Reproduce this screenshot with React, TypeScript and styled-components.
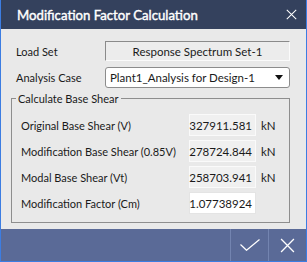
import styled, { createGlobalStyle } from 'styled-components';

const GlobalStyle = createGlobalStyle`
  html, body {
    margin: 0;
    padding: 0;
    background: #e9e9e9;
  }
  * {
    box-sizing: border-box;
  }
`

const Window = styled.div`
  width: 307px;
  height: 262px;
  display: flex;
  flex-direction: column;
  background: #e9e9e9;
  border: 1px solid #3c7de2;
  border-top: none;
  font-family: Lato, "Liberation Sans", sans-serif;
  font-size: 11.5px;
  color: #1a1a1a;
`

const TitleBar = styled.div`
  height: 29px;
  flex: none;
  display: flex;
  align-items: center;
  justify-content: space-between;
  padding: 0 9px 0 16px;
  background: #34415d;
  color: #ffffff;
`

const Title = styled.div`
  font-size: 13.2px;
  font-weight: 400;
  -webkit-text-stroke: 0.4px #ffffff;
`

const TitleClose = styled.button`
  width: 12px;
  height: 12px;
  padding: 0;
  border: none;
  background: none;
  display: flex;
  align-items: center;
  justify-content: center;
  cursor: pointer;
`

const Body = styled.div`
  flex: 1;
  display: flex;
  flex-direction: column;
  padding: 12px 16px 0 10px;
`

const FieldRow = styled.div`
  display: grid;
  grid-template-columns: 89px 1fr;
  align-items: center;
  height: 20px;
  padding-left: 5px;
  margin-bottom: 6px;
`

const Label = styled.span`
  white-space: nowrap;
  font-size: 11px;
`

const ReadOnlyBox = styled.div`
  height: 20px;
  display: flex;
  align-items: center;
  justify-content: center;
  background: #ececec;
  border: 1px solid;
  border-color: #8a8a8a #fbfbfb #fbfbfb #8a8a8a;
`

const Select = styled.div`
  height: 21px;
  display: flex;
  align-items: center;
  justify-content: space-between;
  padding: 0 6px 0 4px;
  background: #ffffff;
  border: 1px solid #8c8c8c;
  border-radius: 3px;
`

const GroupBox = styled.fieldset`
  margin: -1px 0 0 0;
  padding: 9px 0 8px 0;
  border: 1px solid #8e8e8e;
  min-width: 0;
`

const Legend = styled.legend`
  margin-left: 4px;
  padding: 0 2px;
  font-size: 11px;
`

const ValueRow = styled.div`
  display: grid;
  grid-template-columns: 163px 67px auto;
  column-gap: 5px;
  align-items: center;
  padding-left: 9px;
  height: 22px;
  margin-bottom: 4px;

  &:last-child {
    margin-bottom: 0;
  }
`

const ValueBox = styled.div<{ $editable?: boolean }>`
  height: 22px;
  display: flex;
  align-items: center;
  justify-content: flex-end;
  padding: 0 3px;
  background: ${p => (p.$editable ? '#ffffff' : '#f0f0f0')};
  border: 1px solid ${p => (p.$editable ? '#e4e4e4' : '#fafafa')};
`

const Footer = styled.div`
  height: 32px;
  flex: none;
  display: flex;
  justify-content: flex-end;
  background: #5a6a97;
`

const FooterButton = styled.button`
  width: 38px;
  height: 100%;
  padding: 0;
  border: none;
  border-left: 1px solid #7384b0;
  background: none;
  display: flex;
  align-items: center;
  justify-content: center;
  cursor: pointer;
`

const rows = [
  { label: 'Original Base Shear (V)', value: '327911.581', unit: 'kN' },
  { label: 'Modification Base Shear (0.85V)', value: '278724.844', unit: 'kN' },
  { label: 'Modal Base Shear (Vt)', value: '258703.941', unit: 'kN' },
  { label: 'Modification Factor (Cm)', value: '1.07738924', unit: '', editable: true },
]

const CrossIcon = ({ size, width }: { size: number; width: number }) => (
  <svg width={size} height={size} viewBox="0 0 14 14">
    <path d="M1 1 L13 13 M13 1 L1 13" stroke="#ffffff" strokeWidth={width} fill="none" />
  </svg>
)

export default function App() {
  return (
    <>
      <GlobalStyle />
      <Window>
        <TitleBar>
          <Title>Modification Factor Calculation</Title>
          <TitleClose>
            <CrossIcon size={11} width={1.3} />
          </TitleClose>
        </TitleBar>
        <Body>
          <FieldRow>
            <Label>Load Set</Label>
            <ReadOnlyBox>Response Spectrum Set-1</ReadOnlyBox>
          </FieldRow>
          <FieldRow>
            <Label>Analysis Case</Label>
            <Select>
              <span>Plant1_Analysis for Design-1</span>
              <svg width="8" height="5" viewBox="0 0 8 5">
                <path d="M0 0 H8 L4 5 Z" fill="#111" />
              </svg>
            </Select>
          </FieldRow>
          <GroupBox>
            <Legend>Calculate Base Shear</Legend>
            {rows.map(r => (
              <ValueRow key={r.label}>
                <Label>{r.label}</Label>
                <ValueBox $editable={r.editable}>{r.value}</ValueBox>
                <span>{r.unit}</span>
              </ValueRow>
            ))}
          </GroupBox>
        </Body>
        <Footer>
          <FooterButton>
            <svg width="20" height="12" viewBox="0 0 20 12">
              <path d="M0.5 5.5 L6.5 11.3 L19.5 0.5" stroke="#ffffff" strokeWidth="1.2" fill="none" />
            </svg>
          </FooterButton>
          <FooterButton>
            <CrossIcon size={15} width={1.2} />
          </FooterButton>
        </Footer>
      </Window>
    </>
  )
}
